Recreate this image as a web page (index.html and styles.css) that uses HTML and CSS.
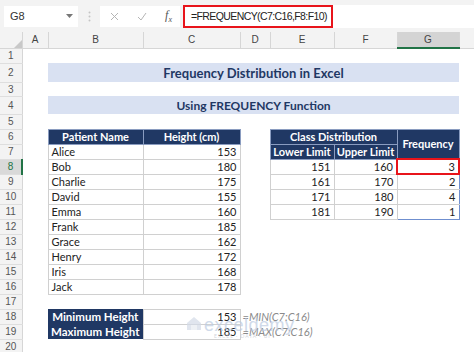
FILE: index.html
```html
<!DOCTYPE html>
<html>
<head>
  <title>Frequency Distribution in Excel</title>
  <link rel="stylesheet" href="styles.css">
</head>
<body>
  <div class="toolbar">
    <div class="namebox">
      <span>G8</span>
      <svg class="caret" width="7" height="4" viewBox="0 0 7 4"><path d="M0 0h7L3.5 4z" fill="#777"/></svg>
    </div>
    <svg class="grip" width="3" height="11" viewBox="0 0 3 11">
      <circle cx="1.5" cy="1.5" r="1" fill="#c4c4c4"/>
      <circle cx="1.5" cy="5.5" r="1" fill="#c4c4c4"/>
      <circle cx="1.5" cy="9.5" r="1" fill="#c4c4c4"/>
    </svg>
    <div class="fxbox">
      <svg width="9" height="9" viewBox="0 0 9 9"><path d="M1 1l7 7M8 1l-7 7" stroke="#b5b5b5" stroke-width="1"/></svg>
      <svg width="10" height="9" viewBox="0 0 10 9"><path d="M1 5l3 3 5-7" stroke="#b5b5b5" stroke-width="1" fill="none"/></svg>
      <span class="fx">f<sub>x</sub></span>
    </div>
    <div class="formula">
      <span class="formula-text">=FREQUENCY(C7:C16,F8:F10)</span>
    </div>
  </div>

  <div class="sheet">
    <table class="grid">
      <colgroup>
        <col style="width:22px"><col style="width:26px"><col style="width:95px"><col style="width:97px">
        <col style="width:30px"><col style="width:64px"><col style="width:63px"><col style="width:62px"><col>
      </colgroup>
      <tr class="colhdr">
        <th class="corner"><svg width="8" height="8" viewBox="0 0 8 8"><path d="M8 0v8H0z" fill="#c8c8c8"/></svg></th>
        <th>A</th><th>B</th><th>C</th><th>D</th><th>E</th><th>F</th><th class="active">G</th><th></th>
      </tr>
      <tr class="h15"><th class="rowhdr">1</th><td colspan="8"></td></tr>
      <tr class="h19"><th class="rowhdr">2</th><td></td><td colspan="6" class="band title">Frequency Distribution in Excel</td><td></td></tr>
      <tr class="h14"><th class="rowhdr">3</th><td colspan="8"></td></tr>
      <tr class="h18"><th class="rowhdr">4</th><td></td><td colspan="6" class="band sub">Using FREQUENCY Function</td><td></td></tr>
      <tr class="h15"><th class="rowhdr">5</th><td colspan="8"></td></tr>
      <tr class="h15">
        <th class="rowhdr">6</th><td></td>
        <td class="hd">Patient Name</td><td class="hd">Height (cm)</td><td></td>
        <td class="hd" colspan="2">Class Distribution</td><td class="hd" rowspan="2">Frequency</td><td></td>
      </tr>
      <tr class="h15">
        <th class="rowhdr">7</th><td></td>
        <td class="cell">Alice</td><td class="cell num">153</td><td></td>
        <td class="hd">Lower Limit</td><td class="hd">Upper Limit</td><td></td>
      </tr>
      <tr class="h15">
        <th class="rowhdr current">8</th><td></td>
        <td class="cell">Bob</td><td class="cell num">180</td><td></td>
        <td class="cell num">151</td><td class="cell num">160</td><td class="cell num pick">3</td><td></td>
      </tr>
      <tr class="h15">
        <th class="rowhdr">9</th><td></td>
        <td class="cell">Charlie</td><td class="cell num">175</td><td></td>
        <td class="cell num">161</td><td class="cell num">170</td><td class="cell num sel">2</td><td></td>
      </tr>
      <tr class="h15">
        <th class="rowhdr">10</th><td></td>
        <td class="cell">David</td><td class="cell num">155</td><td></td>
        <td class="cell num">171</td><td class="cell num">180</td><td class="cell num sel">4</td><td></td>
      </tr>
      <tr class="h15">
        <th class="rowhdr">11</th><td></td>
        <td class="cell">Emma</td><td class="cell num">160</td><td></td>
        <td class="cell num">181</td><td class="cell num">190</td><td class="cell num sel last">1</td><td></td>
      </tr>
      <tr class="h15"><th class="rowhdr">12</th><td></td><td class="cell">Frank</td><td class="cell num">185</td><td colspan="5"></td></tr>
      <tr class="h15"><th class="rowhdr">13</th><td></td><td class="cell">Grace</td><td class="cell num">162</td><td colspan="5"></td></tr>
      <tr class="h15"><th class="rowhdr">14</th><td></td><td class="cell">Henry</td><td class="cell num">172</td><td colspan="5"></td></tr>
      <tr class="h15"><th class="rowhdr">15</th><td></td><td class="cell">Iris</td><td class="cell num">168</td><td colspan="5"></td></tr>
      <tr class="h15"><th class="rowhdr">16</th><td></td><td class="cell">Jack</td><td class="cell num">178</td><td colspan="5"></td></tr>
      <tr class="h15"><th class="rowhdr">17</th><td colspan="8"></td></tr>
      <tr class="h15">
        <th class="rowhdr">18</th><td></td>
        <td class="hd stat">Minimum Height</td><td class="cell num">153</td>
        <td class="note" colspan="5">=MIN(C7:C16)</td>
      </tr>
      <tr class="h15">
        <th class="rowhdr">19</th><td></td>
        <td class="hd stat">Maximum Height</td><td class="cell num">185</td>
        <td class="note" colspan="5">=MAX(C7:C16)</td>
      </tr>
      <tr class="h15"><th class="rowhdr">20</th><td colspan="8"></td></tr>
    </table>

    <div class="watermark">
      <svg width="16" height="15" viewBox="0 0 16 15"><path d="M1 7L8 1l7 6v7H1z" fill="#d3dbe7"/><path d="M5 14V9h6v5" fill="#e8ecf2"/></svg>
      <div class="mark-text">
        <span class="mark-name">exceldemy</span>
        <span class="mark-tag">EXCEL · DATA · BI</span>
      </div>
    </div>
  </div>
</body>
</html>
```

FILE: styles.css
```css
body {
  margin: 0;
  width: 474px;
  height: 352px;
  overflow: hidden;
  background: #ffffff;
  font-family: 'Lato', 'Liberation Sans', sans-serif;
}

.toolbar {
  height: 32px;
  background: #f3f3f3;
  display: flex;
  align-items: center;
  padding: 0 0 0 4px;
  box-sizing: border-box;
}

.namebox {
  width: 74px;
  height: 21px;
  background: #ffffff;
  display: flex;
  align-items: center;
  justify-content: space-between;
  padding: 0 5px 0 6px;
  box-sizing: border-box;
  font-family: 'Liberation Sans', sans-serif;
  font-size: 11px;
  color: #333;
}

.grip {
  margin: 0 9px 0 10px;
}

.fxbox {
  width: 80px;
  height: 21px;
  background: #ffffff;
  display: flex;
  align-items: center;
  justify-content: space-between;
  padding: 0 8px 0 10px;
  box-sizing: border-box;
}

.fx {
  font-family: 'Liberation Serif', serif;
  font-style: italic;
  font-size: 12px;
  color: #555;
}

.fx sub {
  font-size: 8px;
}

.formula {
  flex: 1;
  height: 23px;
  margin-left: 3px;
  background: #ffffff;
  display: flex;
  align-items: center;
}

.formula-text {
  height: 23px;
  line-height: 19px;
  border: 2px solid #e8141b;
  box-sizing: border-box;
  padding: 0 4px 0 6px;
  font-family: 'Liberation Sans', sans-serif;
  font-size: 10.5px;
  letter-spacing: -0.6px;
  color: #222;
}

.sheet {
  position: relative;
}

.grid {
  border-collapse: collapse;
  table-layout: fixed;
  width: 474px;
  font-size: 11px;
  color: #222;
}

.grid th,
.grid td {
  padding: 0;
  white-space: nowrap;
  overflow: visible;
}

.colhdr {
  height: 16px;
  background: #f3f3f3;
}

.colhdr th {
  font-family: 'Liberation Sans', sans-serif;
  font-weight: normal;
  font-size: 10px;
  color: #444;
  border-left: 1px solid #d6d6d6;
  border-bottom: 1px solid #d6d6d6;
}

.colhdr th.corner {
  border-left: none;
  text-align: right;
  vertical-align: bottom;
  line-height: 0;
}

.colhdr th.active {
  background: #d4d4d4;
  border-bottom: 2px solid #217346;
}

.h14 { height: 14px; }
.h15 { height: 15px; }
.h18 { height: 18px; }
.h19 { height: 19px; }

.rowhdr {
  background: #f3f3f3;
  font-family: 'Liberation Sans', sans-serif;
  font-weight: normal;
  font-size: 10px;
  color: #555;
  border-bottom: 1px solid #dedede;
  border-right: 1px solid #d6d6d6;
}

.rowhdr.current {
  background: #d9d9d9;
  color: #217346;
  border-right: 2px solid #217346;
}

.band {
  background: #d9e1f2;
  color: #1f3864;
  font-weight: bold;
  text-align: center;
}

.title {
  font-size: 13px;
}

.sub {
  font-size: 12px;
}

.hd {
  background: #203864;
  color: #ffffff;
  font-weight: bold;
  text-align: center;
  border: 1px solid #8a9cc0;
}

.stat {
  border: none;
  font-size: 11.5px;
}

.cell {
  border: 1px solid #d0d0d0;
  padding: 0 3px !important;
}

.num {
  text-align: right;
}

.sel {
  border-left: 1px solid #6f8fcf;
  border-right: 1px solid #6f8fcf;
}

.sel.last {
  border-bottom: 1px solid #6f8fcf;
}

.pick {
  border: 2px solid #e8141b;
}

.note {
  color: #8a8a8a;
  font-style: italic;
  padding-left: 2px !important;
}

.watermark {
  position: absolute;
  left: 186px;
  top: 284px;
  display: flex;
  align-items: flex-start;
  gap: 2px;
  opacity: 0.7;
  pointer-events: none;
}

.mark-text {
  display: flex;
  flex-direction: column;
  line-height: 1;
}

.mark-name {
  font-family: 'Liberation Sans', sans-serif;
  font-size: 18px;
  color: #bccbe2;
  letter-spacing: 0.5px;
}

.mark-tag {
  font-size: 5px;
  color: #c0c6d0;
  letter-spacing: 1px;
  padding-left: 10px;
}
```
